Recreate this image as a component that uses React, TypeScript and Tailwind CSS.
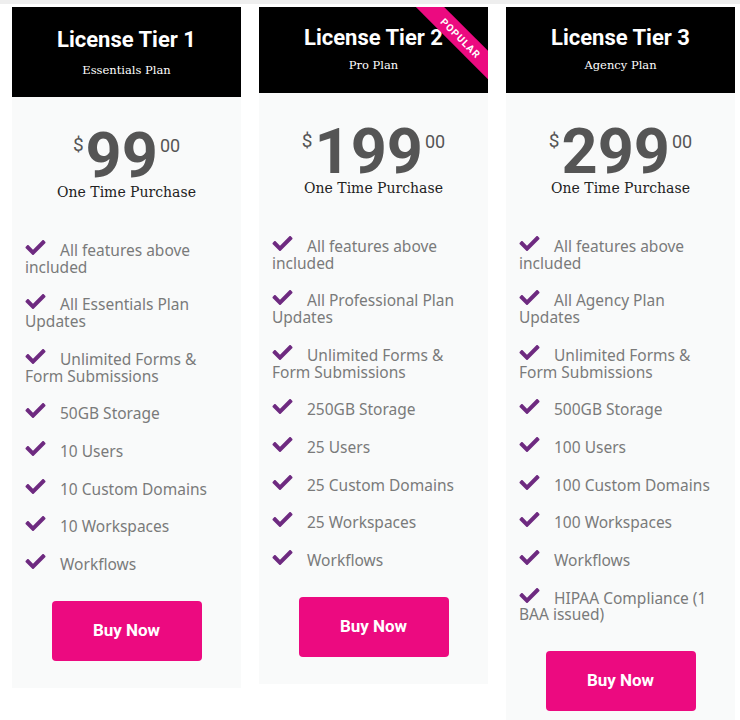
interface Tier {
  title: string;
  plan: string;
  price: string;
  features: string[];
  popular?: boolean;
  tall?: boolean;
}

const tiers: Tier[] = [
  {
    title: "License Tier 1",
    plan: "Essentials Plan",
    price: "99",
    tall: true,
    features: [
      "All features above included",
      "All Essentials Plan Updates",
      "Unlimited Forms & Form Submissions",
      "50GB Storage",
      "10 Users",
      "10 Custom Domains",
      "10 Workspaces",
      "Workflows",
    ],
  },
  {
    title: "License Tier 2",
    plan: "Pro Plan",
    price: "199",
    popular: true,
    features: [
      "All features above included",
      "All Professional Plan Updates",
      "Unlimited Forms & Form Submissions",
      "250GB Storage",
      "25 Users",
      "25 Custom Domains",
      "25 Workspaces",
      "Workflows",
    ],
  },
  {
    title: "License Tier 3",
    plan: "Agency Plan",
    price: "299",
    features: [
      "All features above included",
      "All Agency Plan Updates",
      "Unlimited Forms & Form Submissions",
      "500GB Storage",
      "100 Users",
      "100 Custom Domains",
      "100 Workspaces",
      "Workflows",
      "HIPAA Compliance (1 BAA issued)",
    ],
  },
];

const sans = "font-['Roboto',sans-serif]";
const serif = "font-['DejaVu_Serif',serif]";

// font-awesome style check, cropped to the glyph
function Check() {
  return (
    <svg
      viewBox="0 64 512 384"
      className="relative -top-[2px] mr-[14px] inline-block h-[15px] w-[21px] align-top"
      fill="#6e2a80"
    >
      <path d="M173.9 439.4l-166.4-166.4c-10-10-10-26.2 0-36.2l36.2-36.2c10-10 26.2-10 36.2 0L192 312.7 432.1 72.6c10-10 26.2-10 36.2 0l36.2 36.2c10 10 10 26.2 0 36.2L210.1 439.4c-10 10-26.2 10-36.2 0z" />
    </svg>
  );
}

function PriceCard({ tier }: { tier: Tier }) {
  return (
    <div className="w-[229px] shrink-0 bg-[#f9fafa]">
      <div
        className={`relative overflow-hidden bg-black text-center text-white ${
          tier.tall ? "pt-[20px] pb-[19px]" : "pt-[18px] pb-[20px]"
        }`}
      >
        <div className={`${sans} text-[22px] font-bold leading-[26px]`}>{tier.title}</div>
        <div className={`${serif} text-[11.5px] leading-[16px] ${tier.tall ? "mt-[9px]" : "mt-[6px]"}`}>
          {tier.plan}
        </div>
        {tier.popular && (
          <div
            className={`${sans} absolute left-[142px] top-[21px] flex h-[20px] w-[120px] rotate-45 items-center justify-center bg-[#ec0a80] text-[10px] font-bold tracking-[1px] text-white`}
          >
            POPULAR
          </div>
        )}
      </div>

      <div className="px-[13px] pt-[34px] pb-[27px]">
        <div className="flex items-start justify-center text-[#555]">
          <span className={`${sans} mt-[4px] text-[19px] leading-none`}>$</span>
          <span className={`${sans} mx-[2px] text-[63px] font-bold leading-[50px]`}>{tier.price}</span>
          <span className={`${sans} mt-[6px] text-[18px] leading-none`}>00</span>
        </div>
        <div className={`${serif} mt-[2px] text-center text-[14px] leading-[18px] text-[#222]`}>
          One Time Purchase
        </div>

        <ul className="mt-[41px] flex flex-col gap-[21px] font-['Noto_Sans',sans-serif] text-[15.5px] leading-[16.7px] text-[#7a7a7a]">
          {tier.features.map((f) => (
            <li key={f}>
              <Check />
              {f}
            </li>
          ))}
        </ul>

        <div className="mt-[28px] flex justify-center">
          <button
            className={`${sans} h-[60px] w-[150px] rounded-[4px] bg-[#ec0a80] text-[17px] font-bold text-white`}
          >
            Buy Now
          </button>
        </div>
      </div>
    </div>
  );
}

export default function App() {
  return (
    <div className="min-h-[720px] bg-white">
      <div className="h-[4px] bg-[#eeeeee]" />
      <div className="mt-[3px] flex items-start gap-[18px] pl-[12px]">
        {tiers.map((t) => (
          <PriceCard key={t.title} tier={t} />
        ))}
      </div>
    </div>
  );
}
